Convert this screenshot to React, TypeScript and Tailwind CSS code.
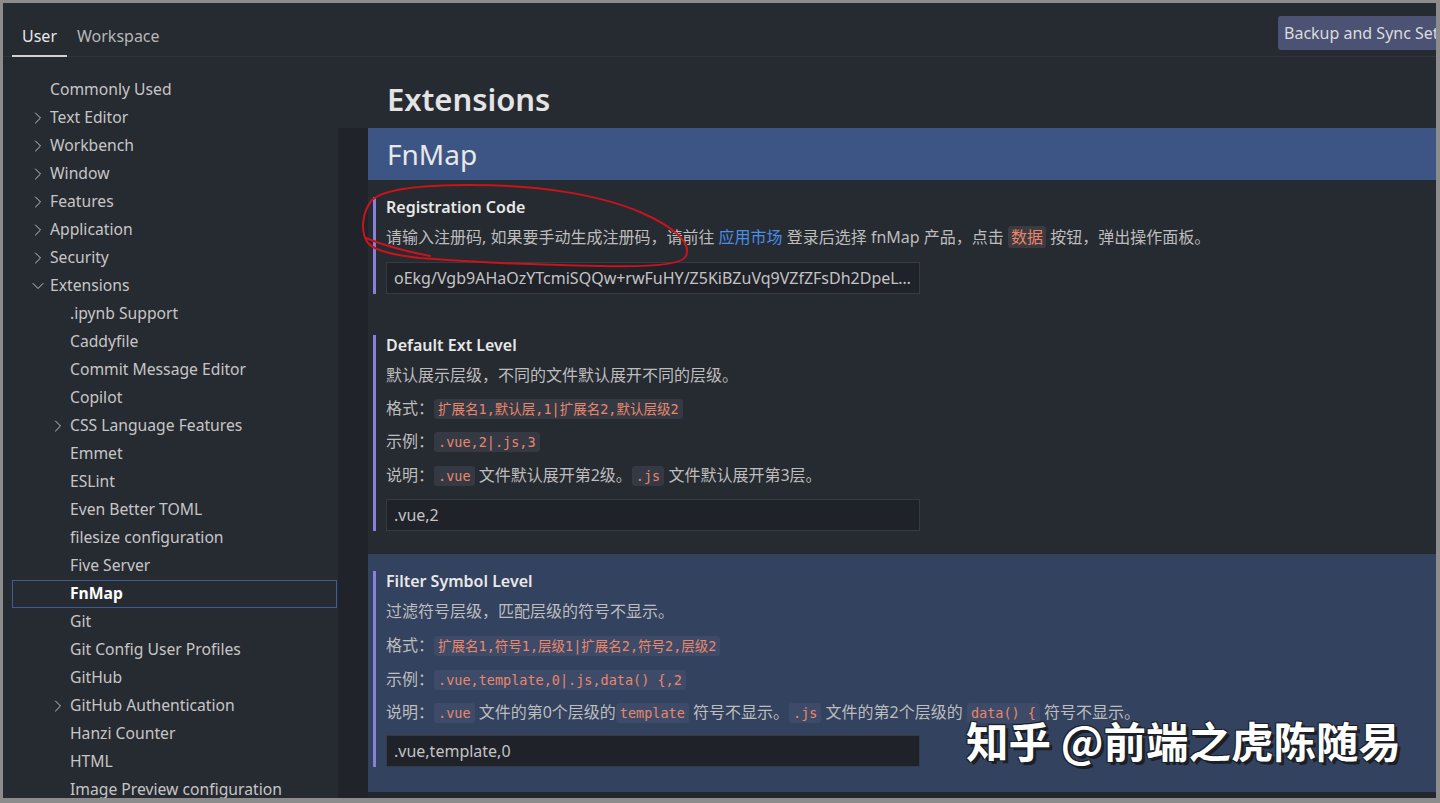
import { ChevronRight, ChevronDown } from "lucide-react";

type NavItem = {
  label: string;
  depth: number;
  chevron?: "right" | "down";
  selected?: boolean;
};

const navItems: NavItem[] = [
  { label: "Commonly Used", depth: 0 },
  { label: "Text Editor", depth: 0, chevron: "right" },
  { label: "Workbench", depth: 0, chevron: "right" },
  { label: "Window", depth: 0, chevron: "right" },
  { label: "Features", depth: 0, chevron: "right" },
  { label: "Application", depth: 0, chevron: "right" },
  { label: "Security", depth: 0, chevron: "right" },
  { label: "Extensions", depth: 0, chevron: "down" },
  { label: ".ipynb Support", depth: 1 },
  { label: "Caddyfile", depth: 1 },
  { label: "Commit Message Editor", depth: 1 },
  { label: "Copilot", depth: 1 },
  { label: "CSS Language Features", depth: 1, chevron: "right" },
  { label: "Emmet", depth: 1 },
  { label: "ESLint", depth: 1 },
  { label: "Even Better TOML", depth: 1 },
  { label: "filesize configuration", depth: 1 },
  { label: "Five Server", depth: 1 },
  { label: "FnMap", depth: 1, selected: true },
  { label: "Git", depth: 1 },
  { label: "Git Config User Profiles", depth: 1 },
  { label: "GitHub", depth: 1 },
  { label: "GitHub Authentication", depth: 1, chevron: "right" },
  { label: "Hanzi Counter", depth: 1 },
  { label: "HTML", depth: 1 },
  { label: "Image Preview configuration", depth: 1 },
];

const uiFont = "font-['Noto_Sans','Noto_Sans_CJK_SC',sans-serif]";
const line = "h-[22px] whitespace-nowrap text-[16px] leading-[22px] text-[#bdbdbd]";

function Code({ children, hl }: { children: string; hl?: boolean }) {
  return (
    <code
      className={`rounded-[3px] px-[4px] py-[2px] font-['DejaVu_Sans_Mono','Noto_Sans_CJK_SC',monospace] text-[13.5px] leading-[16px] text-[#e8876c] ${
        hl ? "bg-[#3e4b68]" : "bg-[#353943]"
      }`}
    >
      {children}
    </code>
  );
}

function Input({ value }: { value: string }) {
  return (
    <div className="flex h-[32px] w-[534px] items-center border border-[#363a43] bg-[#1f2228] px-[7px] text-[16px] text-[#c4c4c4]">
      <span className="truncate">{value}</span>
    </div>
  );
}

function Sidebar() {
  return (
    <div className="w-[335px] shrink-0 overflow-hidden pt-[19px]">
      {navItems.map((item) => (
        <div
          key={item.label}
          className={`ml-[9px] mr-[1px] flex h-[28px] items-center gap-[2px] ${
            item.selected ? "border border-[#3f5b94] text-white font-bold" : "border border-transparent text-[#c6c6c6]"
          } ${item.depth === 0 ? "pl-[15px]" : "pl-[35px]"}`}
        >
          <span className="flex w-[20px] justify-center text-[#c6c6c6]">
            {item.chevron === "right" && <ChevronRight size={20} strokeWidth={1.2} />}
            {item.chevron === "down" && <ChevronDown size={20} strokeWidth={1.2} />}
          </span>
          <span className="text-[15.7px] leading-none">{item.label}</span>
        </div>
      ))}
    </div>
  );
}

export default function App() {
  return (
    <div className={`relative h-[803px] w-[1440px] overflow-hidden bg-[#8c8c8c] pb-[5px] pl-[3px] pr-[4px] pt-[3px] ${uiFont}`}>
      <div className="flex h-full flex-col bg-[#262a31]">
        {/* top tabs */}
        <div className="flex h-[54px] shrink-0 items-start border-b border-[#30343c]">
          <div className="flex pl-[9px] pt-[21px] text-[16px]">
            <div className="flex h-[33px] items-start border-b-2 border-[#d0d0d0] px-[10px] text-[#e8e8e8]">User</div>
            <div className="px-[10px] text-[#b8b8b8]">Workspace</div>
          </div>
          <div className="ml-auto mt-[13px] flex h-[34px] w-[158px] items-center overflow-hidden whitespace-nowrap rounded-l-[3px] bg-[#4b5274] pl-[6px] text-[16px] text-[#dcdcdc]">
            Backup and Sync Settings
          </div>
        </div>

        <div className="flex min-h-0 flex-1">
          <Sidebar />

          <div className="flex min-w-0 flex-1 flex-col">
            <div className="flex h-[71px] shrink-0 items-center pl-[49px] pt-[14px] text-[31px] font-semibold text-[#e4e4e4]">
              Extensions
            </div>

            <div className="flex min-h-0 flex-1">
              <div className="w-[30px] shrink-0 bg-[#20232a]" />
              <div className="flex min-w-0 flex-1 flex-col">
                <div className="flex h-[52px] shrink-0 items-center bg-[#3c5585] pl-[19px] text-[28px] text-[#e8e8e8]">
                  FnMap
                </div>

                {/* Registration Code */}
                <div className="px-[5px] pt-[17px]">
                  <div className="border-l-[3px] border-[#8b80d8] pl-[10px]">
                    <div className="h-[20px] text-[16px] font-semibold leading-[20px] text-[#e8e8e8]">Registration Code</div>
                    <div className={`mt-[9px] ${line}`}>
                      请输入注册码, 如果要手动生成注册码，请前往 <span className="text-[#4b8ee6]">应用市场</span> 登录后选择 fnMap 产品，点击{" "}
                      <span className="rounded-[3px] bg-[#3d3a40] px-[3px] text-[#e8876c]">数据</span> 按钮，弹出操作面板。
                    </div>
                    <div className="mt-[14px]">
                      <Input value="oEkg/Vgb9AHaOzYTcmiSQQw+rwFuHY/Z5KiBZuVq9VZfZFsDh2DpeLGx4r8Pz" />
                    </div>
                  </div>
                </div>

                {/* Default Ext Level */}
                <div className="px-[5px] pt-[41px]">
                  <div className="border-l-[3px] border-[#8b80d8] pl-[10px]">
                    <div className="h-[20px] text-[16px] font-semibold leading-[20px] text-[#e8e8e8]">Default Ext Level</div>
                    <div className={`mt-[9px] ${line}`}>默认展示层级，不同的文件默认展开不同的层级。</div>
                    <div className={`mt-[11px] ${line}`}>
                      格式：<Code>扩展名1,默认层,1|扩展名2,默认层级2</Code>
                    </div>
                    <div className={`mt-[11px] ${line}`}>
                      示例：<Code>.vue,2|.js,3</Code>
                    </div>
                    <div className={`mt-[12px] ${line}`}>
                      说明：<Code>.vue</Code> 文件默认展开第2级。<Code>.js</Code> 文件默认展开第3层。
                    </div>
                    <div className="mt-[13px]">
                      <Input value=".vue,2" />
                    </div>
                  </div>
                </div>

                {/* Filter Symbol Level */}
                <div className="mt-[23px] bg-[#33425f] px-[5px] pb-[25px] pt-[17px]">
                  <div className="border-l-[3px] border-[#8b80d8] pl-[10px]">
                    <div className="h-[20px] text-[16px] font-semibold leading-[20px] text-[#e8e8e8]">Filter Symbol Level</div>
                    <div className={`mt-[9px] ${line}`}>过滤符号层级，匹配层级的符号不显示。</div>
                    <div className={`mt-[12px] ${line}`}>
                      格式：<Code hl>扩展名1,符号1,层级1|扩展名2,符号2,层级2</Code>
                    </div>
                    <div className={`mt-[12px] ${line}`}>
                      示例：<Code hl>{".vue,template,0|.js,data() {,2"}</Code>
                    </div>
                    <div className={`mt-[11px] ${line}`}>
                      说明：<Code hl>.vue</Code> 文件的第0个层级的<Code hl>template</Code> 符号不显示。<Code hl>.js</Code> 文件的第2个层级的{" "}
                      <Code hl>{"data() {"}</Code> 符号不显示。
                    </div>
                    <div className="mt-[12px]">
                      <Input value=".vue,template,0" />
                    </div>
                  </div>
                </div>
                <div className="flex-1 bg-[#22262d]" />
              </div>
            </div>
          </div>
        </div>
      </div>

      {/* hand drawn annotation */}
      <svg className="pointer-events-none absolute left-0 top-0" width="1440" height="803">
        <path
          d="M 372 200 C 385 188, 425 185, 470 185 C 540 185, 600 195, 640 212 C 672 226, 692 242, 686 256 C 682 266, 640 267, 600 266 C 540 265, 470 262, 420 258 C 392 255, 374 250, 368 243 C 360 232, 362 212, 372 200 M 366 238 C 380 244, 400 250, 430 256"
          fill="none"
          stroke="#c8141c"
          strokeWidth="2"
          strokeLinecap="round"
        />
      </svg>

      {/* watermark */}
      <div className="pointer-events-none absolute left-[966px] top-[713px] whitespace-nowrap font-['Noto_Sans_CJK_SC',sans-serif] text-[42.5px] font-semibold leading-[54px] text-white [text-shadow:3px_3px_0_#1b1f27,-1px_-1px_0_#1b1f27,1px_-1px_0_#1b1f27,-1px_1px_0_#1b1f27]">
        知乎 @前端之虎陈随易
      </div>
    </div>
  );
}
